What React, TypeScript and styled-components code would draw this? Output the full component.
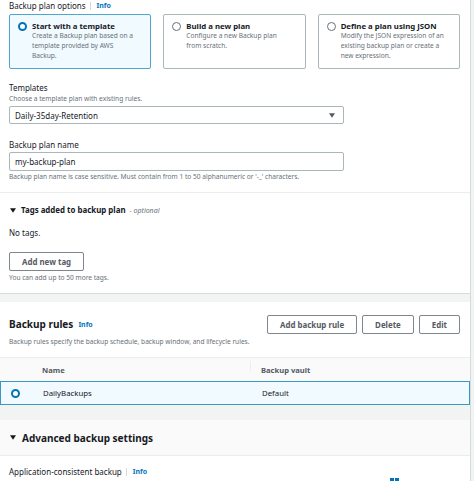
import React from "react";
import styled, { createGlobalStyle } from "styled-components";

const GlobalStyle = createGlobalStyle`
  html, body {
    margin: 0;
    padding: 0;
    background: #f2f3f3;
  }
  body {
    font-family: "Noto Sans", "Liberation Sans", sans-serif;
    color: #16191f;
  }
`;

const Page = styled.div`
  width: 470px;
  height: 481px;
  overflow: hidden;
  border-right: 1px solid #d5dbdb;
  background: #f2f3f3;
  display: flex;
  flex-direction: column;
`;

const Panel = styled.section<{ $gap?: number }>`
  background: #fff;
  margin-top: ${(p) => p.$gap ?? 0}px;
`;

const Section = styled.div<{ $top?: number; $bottom?: number; $divided?: boolean }>`
  padding: ${(p) => p.$top ?? 0}px 10px ${(p) => p.$bottom ?? 0}px 9px;
  border-top: ${(p) => (p.$divided ? "1px solid #eaeded" : "none")};
`;

const PlanOptions = styled(Panel)`
  border-bottom: 1px solid #d5dbdb;
`;

const LabelRow = styled.div<{ $top?: number }>`
  display: flex;
  align-items: center;
  margin-top: ${(p) => p.$top ?? 0}px;
  font-size: 8px;
  line-height: 12px;
  color: #16191f;
`;

const InfoLink = styled.a`
  margin-left: 4px;
  padding-left: 6px;
  border-left: 1px solid #d5dbdb;
  line-height: 8px;
  font-size: 7px;
  font-weight: 700;
  color: #0073bb;
  text-decoration: none;
`;

const Hint = styled.div<{ $top?: number }>`
  margin-top: ${(p) => p.$top ?? 0}px;
  font-size: 6.6px;
  line-height: 10px;
  color: #687078;
`;

const Tiles = styled.div`
  display: grid;
  grid-template-columns: repeat(3, 1fr);
  gap: 12px;
  margin-top: 2px;
`;

const Tile = styled.div<{ $selected?: boolean }>`
  box-sizing: border-box;
  height: 55px;
  display: flex;
  align-items: flex-start;
  gap: 5px;
  padding: 6px 6px 0 8px;
  border: 1px solid ${(p) => (p.$selected ? "#4fa6cf" : "#aab7b8")};
  border-radius: 2px;
  background: ${(p) => (p.$selected ? "#f1faff" : "#fff")};
`;

const Radio = styled.span<{ $checked?: boolean; $top?: number }>`
  flex: none;
  box-sizing: border-box;
  width: 9px;
  height: 9px;
  margin-top: ${(p) => p.$top ?? 0}px;
  border-radius: 50%;
  background: #fff;
  border: ${(p) => (p.$checked ? "2.5px solid #0073bb" : "1px solid #687078")};
`;

const TileText = styled.div`
  display: flex;
  flex-direction: column;
`;

const TileTitle = styled.div`
  font-size: 7.8px;
  line-height: 10px;
  font-weight: 700;
  color: #16191f;
`;

const Field = styled.div<{ $height: number; $top?: number }>`
  box-sizing: border-box;
  width: 335px;
  height: ${(p) => p.$height}px;
  margin-top: ${(p) => p.$top ?? 0}px;
  display: flex;
  align-items: center;
  justify-content: space-between;
  padding: 0 8px 0 5px;
  border: 1px solid #aab7b8;
  border-radius: 2px;
  background: #fff;
  font-size: 8px;
  color: #16191f;
`;

const ExpandRow = styled.div<{ $large?: boolean }>`
  display: flex;
  align-items: center;
  gap: ${(p) => (p.$large ? 6 : 5)}px;
  padding-left: 1px;
  font-size: ${(p) => (p.$large ? 10 : 7.9)}px;
  line-height: 12px;
  font-weight: 700;
  color: #16191f;
`;

const Optional = styled.span`
  margin-left: 4px;
  font-weight: 400;
  font-style: italic;
  font-size: 7px;
  color: #687078;
`;

const Button = styled.button<{ $top?: number }>`
  box-sizing: border-box;
  height: 19px;
  margin-top: ${(p) => p.$top ?? 0}px;
  padding: 0 12px;
  border: 1px solid #7d868c;
  border-radius: 2px;
  background: #fff;
  font-family: inherit;
  font-size: 7.9px;
  font-weight: 700;
  color: #545b64;
`;

const RulesHeader = styled.div`
  display: flex;
  align-items: center;
  justify-content: space-between;
  padding: 13px 10px 0 9px;
`;

const RulesTitle = styled.h2`
  margin: 0;
  display: flex;
  align-items: center;
  font-size: 10px;
  line-height: 19px;
  font-weight: 700;
  color: #16191f;
`;

const PlainInfo = styled(InfoLink)`
  border-left: none;
  padding-left: 0;
  margin-left: 5px;
`;

const ButtonGroup = styled.div`
  display: flex;
  gap: 5px;
`;

const TableGap = styled.div`
  height: 10px;
`;

const TableRow = styled.div<{ $head?: boolean }>`
  box-sizing: border-box;
  height: 24px;
  display: grid;
  grid-template-columns: 28px 222px 1fr;
  align-items: center;
  font-size: ${(p) => (p.$head ? 7.6 : 7.8)}px;
  font-weight: ${(p) => (p.$head ? 700 : 400)};
  color: ${(p) => (p.$head ? "#545b64" : "#16191f")};
  background: ${(p) => (p.$head ? "#fafafa" : "#f1faff")};
  border-top: 1px solid ${(p) => (p.$head ? "#eaeded" : "#3d97c0")};
  border-bottom: ${(p) => (p.$head ? "none" : "1px solid #3d97c0")};
  border-left: ${(p) => (p.$head ? "none" : "1px solid #3d97c0")};
  border-right: ${(p) => (p.$head ? "none" : "1px solid #3d97c0")};
`;

const RadioCell = styled.div`
  display: flex;
  justify-content: center;
`;

const Cell = styled.div<{ $second?: boolean; $split?: boolean }>`
  position: relative;
  padding-left: ${(p) => (p.$second ? 11 : 14)}px;
  &::before {
    content: "";
    display: ${(p) => (p.$split ? "block" : "none")};
    position: absolute;
    left: 0;
    top: -4px;
    height: 10px;
    border-left: 1px solid #eaeded;
  }
`;

const AdvancedHeader = styled.div`
  box-sizing: border-box;
  height: 36px;
  display: flex;
  align-items: center;
  padding: 0 9px;
  background: #fafafa;
  border-bottom: 1px solid #eaeded;
`;

const IconRow = styled.div`
  margin-top: -2px;
  padding-left: 390px;
  line-height: 0;
`;

const Caret = ({ color = "#16191f" }: { color?: string }) => (
  <svg width="6" height="5" viewBox="0 0 8 6">
    <path d="M0 0 L8 0 L4 6 Z" fill={color} />
  </svg>
);

export default function App() {
  return (
    <>
      <GlobalStyle />
      <Page>
        <PlanOptions>
          <Section $bottom={10}>
            <LabelRow>
              Backup plan options
              <InfoLink>Info</InfoLink>
            </LabelRow>
            <Tiles>
              <Tile $selected>
                <Radio $checked $top={1} />
                <TileText>
                  <TileTitle>Start with a template</TileTitle>
                  <Hint>
                    Create a Backup plan based on a<br />
                    template provided by AWS
                    <br />
                    Backup.
                  </Hint>
                </TileText>
              </Tile>
              <Tile>
                <Radio $top={1} />
                <TileText>
                  <TileTitle>Build a new plan</TileTitle>
                  <Hint>
                    Configure a new Backup plan
                    <br />
                    from scratch.
                  </Hint>
                </TileText>
              </Tile>
              <Tile>
                <Radio $top={1} />
                <TileText>
                  <TileTitle>Define a plan using JSON</TileTitle>
                  <Hint>
                    Modify the JSON expression of an
                    <br />
                    existing backup plan or create a
                    <br />
                    new expression.
                  </Hint>
                </TileText>
              </Tile>
            </Tiles>

            <LabelRow $top={13}>Templates</LabelRow>
            <Hint>Choose a template plan with existing rules.</Hint>
            <Field $height={18} $top={2}>
              Daily-35day-Retention
              <Caret color="#545b64" />
            </Field>

            <LabelRow $top={15}>Backup plan name</LabelRow>
            <Field $height={19} $top={1}>
              my-backup-plan
            </Field>
            <Hint $top={1}>
              Backup plan name is case sensitive. Must contain from 1 to 50
              alphanumeric or '-_' characters.
            </Hint>
          </Section>

          <Section $divided $top={11} $bottom={10}>
            <ExpandRow>
              <Caret />
              <span>
                Tags added to backup plan
                <Optional>- optional</Optional>
              </span>
            </ExpandRow>
            <LabelRow $top={10}>No tags.</LabelRow>
            <Button $top={13}>Add new tag</Button>
            <Hint $top={2}>You can add up to 50 more tags.</Hint>
          </Section>
        </PlanOptions>

        <Panel $gap={8}>
          <RulesHeader>
            <RulesTitle>
              Backup rules
              <PlainInfo>Info</PlainInfo>
            </RulesTitle>
            <ButtonGroup>
              <Button>Add backup rule</Button>
              <Button>Delete</Button>
              <Button>Edit</Button>
            </ButtonGroup>
          </RulesHeader>
          <Section $top={3}>
            <Hint>
              Backup rules specify the backup schedule, backup window, and
              lifecycle rules.
            </Hint>
          </Section>
          <TableGap />
          <TableRow $head>
            <div />
            <Cell>Name</Cell>
            <Cell $second $split>
              Backup vault
            </Cell>
          </TableRow>
          <TableRow>
            <RadioCell>
              <Radio $checked />
            </RadioCell>
            <Cell>DailyBackups</Cell>
            <Cell $second>Default</Cell>
          </TableRow>
        </Panel>

        <Panel $gap={15}>
          <AdvancedHeader>
            <ExpandRow $large>
              <Caret />
              Advanced backup settings
            </ExpandRow>
          </AdvancedHeader>
          <Section $top={10}>
            <LabelRow>
              Application-consistent backup
              <InfoLink>Info</InfoLink>
            </LabelRow>
          </Section>
          <IconRow>
            <svg width="10" height="8" viewBox="0 0 10 8">
              <rect x="0" y="2" width="4" height="6" fill="#0073bb" />
              <rect x="5" y="2" width="4" height="6" fill="#0073bb" />
            </svg>
          </IconRow>
        </Panel>
      </Page>
    </>
  );
}
